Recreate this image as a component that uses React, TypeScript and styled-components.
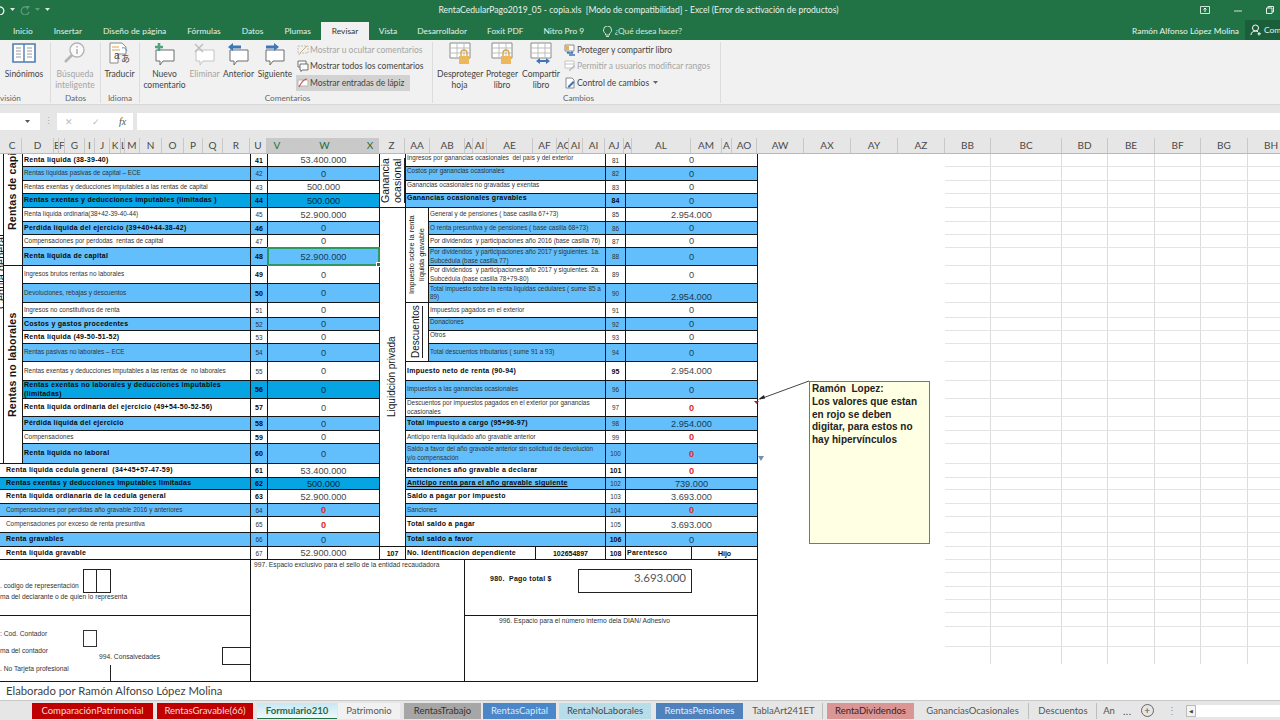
import React from 'react';
import styled, { createGlobalStyle } from 'styled-components';

const GlobalStyle = createGlobalStyle`
  html, body {
    margin: 0;
    padding: 0;
    background: #fff;
  }
  body {
    font-family: 'Lato', 'Open Sans', sans-serif;
  }
`;

const UI_FONT = `'Lato', 'Open Sans', sans-serif`;
const FORM_FONT = `'Liberation Sans', Arial, sans-serif`;

const Page = styled.div`
  width: 1280px;
  height: 720px;
  overflow: hidden;
  display: flex;
  flex-direction: column;
`;

/* ---------- title bar + tabs ---------- */

const TitleBar = styled.div`
  height: 20px;
  background: #217346;
  color: #fff;
  display: grid;
  grid-template-columns: 1fr auto 1fr;
  align-items: center;
  font: 8.6px ${UI_FONT};
`;

const QuickAccess = styled.div`
  display: flex;
  align-items: center;
  gap: 5px;
  margin-left: -5px;
`;

const WindowControls = styled.div`
  display: flex;
  justify-content: flex-end;
  align-items: center;
  gap: 24px;
  margin-right: 6px;
`;

const Title = styled.div`
  padding-right: 3px;
  white-space: pre;
  color: #e9f2ec;
`;

const TabBar = styled.div`
  height: 20px;
  background: #217346;
  display: flex;
  align-items: flex-end;
  padding-left: 2.5px;
  font: 8.4px ${UI_FONT};
`;

const Tab = styled.div<{ $active?: boolean }>`
  height: 18px;
  display: flex;
  align-items: center;
  padding: 0 10.5px;
  white-space: nowrap;
  color: ${(p) => (p.$active ? '#333' : '#e4efe8')};
  background: ${(p) => (p.$active ? '#f1f1f1' : 'transparent')};
`;

const TightTab = styled(Tab)`
  padding: 0 10px;
`;

const TellMe = styled(Tab)`
  gap: 3px;
  margin-left: -2px;
  letter-spacing: -0.1px;
  color: #d6e6dc;
`;

const UserArea = styled.div`
  margin-left: auto;
  height: 18px;
  display: flex;
  align-items: center;
  color: #e9f2ec;
`;

const ShareButton = styled.div`
  margin-left: 6px;
  width: 35px;
  height: 20px;
  margin-top: -2px;
  display: flex;
  align-items: center;
  gap: 2px;
  padding-left: 5px;
  box-sizing: border-box;
  background: #1b5e3a;
  overflow: hidden;
`;

/* ---------- ribbon ---------- */

const Ribbon = styled.div`
  height: 65px;
  box-sizing: border-box;
  background: #f1f1f1;
  border-bottom: 1px solid #d8d8d8;
  display: flex;
  font: 8.5px ${UI_FONT};
  color: #444;
`;

const Group = styled.div<{ $w: number; $pad?: number }>`
  width: ${(p) => p.$w}px;
  flex: none;
  box-sizing: border-box;
  padding-left: ${(p) => p.$pad ?? 0}px;
  display: flex;
  flex-direction: column;
  border-right: 1px solid #dcdcdc;
  margin: 2px 0 1px;
`;

const GroupBody = styled.div`
  flex: 1;
  display: flex;
  gap: 3px;
  min-height: 0;
`;

const GroupLabel = styled.div<{ $align?: string }>`
  height: 10px;
  line-height: 10px;
  text-align: ${(p) => p.$align ?? 'center'};
  font-size: 8.2px;
  color: #666;
`;

const BigButton = styled.div<{ $w: number; $off?: boolean }>`
  width: ${(p) => p.$w}px;
  flex: none;
  text-align: center;
  line-height: 11px;
  color: ${(p) => (p.$off ? '#a5a5a5' : '#444')};
  svg {
    display: block;
    margin: 0 auto 3px;
  }
`;

const SmallList = styled.div<{ $w: number }>`
  width: ${(p) => p.$w}px;
  flex: none;
  display: flex;
  flex-direction: column;
  gap: 1px;
`;

const SmallItem = styled.div<{ $off?: boolean; $sel?: boolean }>`
  height: 15.5px;
  display: flex;
  align-items: center;
  gap: 1px;
  padding-left: 1px;
  white-space: nowrap;
  color: ${(p) => (p.$off ? '#a5a5a5' : '#444')};
  background: ${(p) => (p.$sel ? '#d2d2d2' : 'transparent')};
  width: ${(p) => (p.$sel ? '113px' : 'auto')};
`;

const ItemCaret = styled.span`
  margin-left: 3px;
  display: flex;
`;

/* ---------- formula bar ---------- */

const FormulaBar = styled.div`
  height: 33px;
  box-sizing: border-box;
  padding-top: 8px;
  background: #e6e6e6;
  display: flex;
  align-items: flex-start;
`;

const NameBox = styled.div`
  width: 40px;
  height: 17px;
  background: #fff;
  display: flex;
  align-items: center;
  justify-content: flex-end;
  padding-right: 10px;
  box-sizing: border-box;
  color: #555;
`;

const BarDots = styled.div`
  width: 17px;
  text-align: center;
  height: 17px;
  line-height: 16px;
  font-size: 9px;
  color: #aaa;
`;

const FxBox = styled.div`
  width: 76px;
  height: 17px;
  background: #fff;
  display: flex;
  align-items: center;
  gap: 19px;
  padding-left: 8px;
  box-sizing: border-box;
  color: #bbb;
  font-size: 9px;
`;

const FxLabel = styled.span`
  font: italic 10px 'Liberation Serif', serif;
  color: #555;
`;

const FormulaInput = styled.div`
  flex: 1;
  margin-left: 4px;
  height: 17px;
  background: #fff;
`;

/* ---------- column header ---------- */

const ColHeader = styled.div`
  height: 16px;
  background: #e6e6e6;
  border-bottom: 1px solid #b9b9b9;
  box-sizing: border-box;
  display: flex;
  padding-left: 3px;
  overflow: hidden;
`;

const ColCell = styled.div<{ $w: number; $sel?: boolean }>`
  width: ${(p) => p.$w}px;
  flex: none;
  box-sizing: border-box;
  border-right: 1px solid #c8c8c8;
  background: ${(p) => (p.$sel ? '#c9c9c9' : 'transparent')};
  color: ${(p) => (p.$sel ? '#1e6b40' : '#4a4a4a')};
  text-align: center;
  font: 10px/15px ${UI_FONT};
  overflow: hidden;
  white-space: nowrap;
`;

/* ---------- sheet ---------- */

const Sheet = styled.div`
  position: relative;
  height: 528px;
  flex: none;
  display: flex;
  overflow: hidden;
`;

const FormArea = styled.div`
  width: 758px;
  flex: none;
  font-family: ${FORM_FONT};
`;

const Spacer = styled.div`
  width: 187px;
  flex: none;
`;

const Gridlines = styled.div`
  flex: 1;
  overflow: hidden;
`;

const GridRow = styled.div<{ $h: number }>`
  height: ${(p) => p.$h}px;
  box-sizing: border-box;
  border-bottom: 1px solid #e4e4e4;
  display: flex;
  &:last-child {
    border-bottom: 0;
  }
`;

const GridCell = styled.div<{ $w: number }>`
  width: ${(p) => p.$w}px;
  flex: none;
  box-sizing: border-box;
  border-right: 1px solid #dcdcdc;
`;

const FormGrid = styled.div`
  display: grid;
  grid-template-columns: 3px 18px 227px 16px 111px 25px 22px 106px 69px 19px 65px 65px;
  grid-template-rows: 12px 13px 12px 13px 13px 12px 12px 17px 17px 18px 14px 12px 12px 17px 18px 17px 17px 13px 12px 19px 13px 11px 13px 12px 15px 13px 12px;
  gap: 1px;
  padding-right: 1px;
  background: #161616;
`;

type Tone = 'white' | 'blue' | 'dark';

const toneBg: Record<Tone, string> = {
  white: '#ffffff',
  blue: '#62bffb',
  dark: '#07a4e4',
};

const toneInk: Record<Tone, string> = {
  white: '#43474b',
  blue: '#173b57',
  dark: '#052a42',
};

const Cell = styled.div<{ $row: number; $col: number; $colEnd?: number; $tone?: Tone }>`
  grid-row: ${(p) => p.$row};
  grid-column: ${(p) => p.$col} / ${(p) => p.$colEnd ?? p.$col + 1};
  background: ${(p) => toneBg[p.$tone ?? 'white']};
  min-width: 0;
  min-height: 0;
  overflow: hidden;
  position: relative;
`;

const Label = styled(Cell)<{ $bold?: boolean; $pad?: number; $under?: boolean; $top?: boolean }>`
  display: flex;
  align-items: ${(p) => (p.$top ? 'flex-start' : 'center')};
  padding-left: ${(p) => p.$pad ?? 1}px;
  padding-right: 2px;
  box-sizing: border-box;
  color: ${(p) => (p.$bold ? '#0a0a0a' : '#333')};
  font-size: ${(p) => (p.$bold ? '7px' : '6.4px')};
  font-weight: ${(p) => (p.$bold ? 700 : 400)};
  letter-spacing: ${(p) => (p.$bold ? '0.25px' : '0')};
  line-height: 8.5px;
  white-space: pre-wrap;
  text-decoration: ${(p) => (p.$under ? 'underline' : 'none')};
`;

const Num = styled(Cell)<{ $bold?: boolean }>`
  display: flex;
  align-items: center;
  justify-content: center;
  color: ${(p) => (p.$bold ? '#0a0a0a' : '#333')};
  font-size: ${(p) => (p.$bold ? '7px' : '6.4px')};
  font-weight: ${(p) => (p.$bold ? 700 : 400)};
`;

const Value = styled(Cell)<{ $red?: boolean; $selected?: boolean; $bottom?: boolean }>`
  display: flex;
  align-items: ${(p) => (p.$bottom ? 'flex-end' : 'center')};
  justify-content: center;
  font-size: 9.2px;
  color: ${(p) => (p.$red ? '#e02a2a' : toneInk[p.$tone ?? 'white'])};
  font-weight: ${(p) => (p.$red ? 700 : 400)};
  ${(p) =>
    p.$selected
      ? 'box-shadow: inset 0 0 0 1px #2e9a63, 0 0 0 1px #2e9a63; overflow: visible; z-index: 2;'
      : ''}
`;

const FillHandle = styled.span`
  position: absolute;
  right: -2px;
  bottom: -2px;
  width: 3px;
  height: 3px;
  background: #217346;
  border: 1px solid #fff;
`;

const Side = styled.div<{ $row: number; $rowEnd: number; $col: number; $font?: string; $lh?: number; $inset?: number; $bold?: boolean }>`
  grid-row: ${(p) => p.$row} / ${(p) => p.$rowEnd};
  grid-column: ${(p) => p.$col};
  background: #fff;
  overflow: hidden;
  min-height: 0;
  box-sizing: border-box;
  display: flex;
  flex-direction: column;
  align-items: ${(p) => (p.$inset !== undefined ? 'flex-start' : 'center')};
  justify-content: center;
  padding-top: ${(p) => p.$inset ?? 0}px;
  writing-mode: vertical-rl;
  transform: rotate(180deg);
  white-space: nowrap;
  color: #161616;
  font-size: ${(p) => p.$font ?? '10.6px'};
  font-weight: ${(p) => (p.$bold ? 700 : 400)};
  letter-spacing: ${(p) => (p.$bold ? '0.2px' : '0')};
  line-height: ${(p) => p.$lh ?? 1.05};
`;

const Underlined = styled.span`
  border-left: 1px solid #222;
  padding-left: 1px;
`;

const BottomGrid = styled.div`
  display: grid;
  grid-template-columns: 250px 213px 292px;
  grid-template-rows: 55px 65px;
  gap: 1px;
  padding: 1px 1px 1px 0;
  background: #161616;
  font-size: 6.7px;
  color: #333;
`;

const Panel = styled.div<{ $col: number; $row: string }>`
  grid-column: ${(p) => p.$col};
  grid-row: ${(p) => p.$row};
  background: #fff;
  min-height: 0;
  overflow: hidden;
`;

const SignBlock = styled(Panel)`
  padding-top: 9px;
`;

const SignRow = styled.div`
  display: flex;
  align-items: flex-end;
  height: 24px;
`;

const SignText = styled.div`
  width: 83px;
  padding-bottom: 4px;
  white-space: nowrap;
`;

const BoxPair = styled.div`
  width: 28px;
  height: 24px;
  box-sizing: border-box;
  border: 1px solid #222;
  display: flex;
  &::after {
    content: '';
    width: 1px;
    height: 100%;
    background: #222;
    margin-left: 12px;
  }
`;

const SignLine = styled.div`
  white-space: nowrap;
`;

const AccountantBlock = styled(Panel)`
  display: grid;
  grid-template-columns: 99px 11px 112px 28px;
  grid-template-rows: 14px 17px 18px 16px;
`;

const AccText = styled.div<{ $row: number; $wide?: boolean }>`
  grid-row: ${(p) => p.$row};
  grid-column: ${(p) => (p.$wide ? '2 / 4' : '1')};
  white-space: nowrap;
  display: flex;
  align-items: ${(p) => (p.$wide ? 'center' : 'flex-start')};
`;

const CodeLabel = styled.span`
  width: 83px;
  flex: none;
`;

const SmallBox = styled.div`
  width: 14px;
  height: 17px;
  box-sizing: border-box;
  border: 1px solid #333;
  flex: none;
`;

const NoteBox = styled.div`
  grid-row: 3;
  grid-column: 4;
  border: 1px solid #222;
  border-right: 0;
`;

const TickLine = styled.div`
  grid-row: 4;
  grid-column: 3;
  border-left: 1px solid #222;
`;

const StampText = styled.div<{ $pad: number }>`
  padding: 1px 0 0 ${(p) => p.$pad}px;
  white-space: nowrap;
`;

const PayPanel = styled(Panel)`
  display: flex;
  align-items: flex-start;
  padding-top: 9px;
`;

const PayLabel = styled.div`
  width: 113px;
  padding: 6px 0 0 25px;
  box-sizing: border-box;
  font-weight: 700;
  font-size: 7px;
  letter-spacing: 0.25px;
  white-space: pre;
  color: #111;
  flex: none;
`;

const PayBox = styled.div`
  width: 114px;
  height: 24px;
  box-sizing: border-box;
  border: 1px solid #222;
  text-align: right;
  padding: 1px 5px 0 0;
  font: 11.5px ${UI_FONT};
  color: #555;
`;

const FootNote = styled.div`
  height: 18px;
  flex: none;
  padding-left: 6px;
  font: 11.3px/17px ${UI_FONT};
  color: #3f3f3f;
`;

/* ---------- comment over the sheet ---------- */

const Comment = styled.div`
  position: absolute;
  left: 809px;
  top: 227px;
  width: 121px;
  height: 163px;
  box-sizing: border-box;
  border: 1px solid #777;
  background: #ffffe3;
  padding: 1px 2px;
  font: bold 10px/12.8px ${FORM_FONT};
  color: #222;
  white-space: pre-wrap;
`;

const Overlay = styled.svg`
  position: absolute;
  left: 750px;
  top: 220px;
  width: 70px;
  height: 90px;
`;

/* ---------- sheet tabs ---------- */

const TabStrip = styled.div`
  height: 20px;
  flex: none;
  background: #e6e6e6;
  border-top: 1px solid #c9c9c9;
  box-sizing: border-box;
  display: flex;
  align-items: center;
  font: 9.5px ${UI_FONT};
  padding-left: 32px;
`;

const SheetTab = styled.div<{ $w: number; $bg?: string; $fg?: string; $sep?: boolean; $active?: boolean }>`
  width: ${(p) => p.$w}px;
  height: 16px;
  flex: none;
  display: flex;
  align-items: center;
  justify-content: center;
  white-space: nowrap;
  box-sizing: border-box;
  overflow: hidden;
  background: ${(p) => p.$bg ?? 'transparent'};
  color: ${(p) => p.$fg ?? '#555'};
  font-weight: ${(p) => (p.$active ? 700 : 400)};
  ${(p) => (p.$active ? 'border-bottom: 1.5px solid #217346;' : '')}
  ${(p) => (p.$sep ? 'border-right: 1px solid #bdbdbd;' : '')}
`;

const TabGap = styled.div<{ $w: number }>`
  width: ${(p) => p.$w}px;
  flex: none;
`;

const MoreDots = styled.span`
  color: #444;
  font-size: 10px;
  letter-spacing: 0.5px;
  margin-left: 2px;
`;

const PlusCircle = styled.span`
  width: 11px;
  height: 11px;
  margin-left: 9px;
  border: 1px solid #666;
  border-radius: 50%;
  color: #555;
  font-size: 10px;
  line-height: 10px;
  text-align: center;
`;

const VDots = styled.span`
  margin-left: 13px;
  color: #999;
`;

const ScrollTrack = styled.div`
  margin-left: 9px;
  flex: 1;
  height: 12px;
  background: #fff;
  display: flex;
`;

const ScrollArrow = styled.div`
  width: 10px;
  height: 12px;
  box-sizing: border-box;
  border: 1px solid #bbb;
  color: #444;
  font-size: 5px;
  line-height: 10px;
  text-align: center;
  background: #f4f4f4;
`;

/* ---------- data ---------- */

const columns: [string, number][] = [
  ['C', 19], ['D', 32], ['E', 5], ['F', 6], ['G', 20], ['I', 10], ['J', 15], ['K', 11], ['L', 4], ['M', 15],
  ['N', 22], ['O', 22], ['P', 19], ['Q', 20], ['R', 27], ['U', 17], ['V', 21], ['W', 74], ['X', 17], ['Z', 26],
  ['AA', 25], ['AB', 35], ['A', 8], ['AI', 14], ['AE', 46], ['AF', 24], ['AG', 12], ['AI', 14], ['AI', 22], ['AJ', 19],
  ['A', 8], ['AL', 59], ['AM', 31], ['A', 10], ['AO', 25], ['AW', 47], ['AX', 47], ['AY', 47], ['AZ', 47], ['BB', 46],
  ['BC', 71], ['BD', 46], ['BE', 47], ['BF', 46], ['BG', 47], ['BH', 47],
];

type Row = {
  n: number;
  text: string;
  value: string;
  tone: Tone;
  bold?: boolean;
  numBold?: boolean;
  red?: boolean;
  under?: boolean;
  bottom?: boolean;
  top?: boolean;
};

const leftRows: Row[] = [
  { n: 41, text: 'Renta líquida (38-39-40)', value: '53.400.000', tone: 'white', bold: true, numBold: true },
  { n: 42, text: 'Rentas líquidas pasivas de capital – ECE', value: '0', tone: 'blue' },
  { n: 43, text: 'Rentas exentas y deducciones imputables a las rentas de capital', value: '500.000', tone: 'white' },
  { n: 44, text: 'Rentas exentas y deducciones imputables (limitadas )', value: '500.000', tone: 'dark', bold: true, numBold: true },
  { n: 45, text: 'Renta líquida ordinaria(38+42-39-40-44)', value: '52.900.000', tone: 'white' },
  { n: 46, text: 'Perdida líquida del ejercicio (39+40+44-38-42)', value: '0', tone: 'blue', bold: true, numBold: true },
  { n: 47, text: 'Compensaciones por perdodas  rentas de capital', value: '0', tone: 'white' },
  { n: 48, text: 'Renta líquida de capital', value: '52.900.000', tone: 'blue', bold: true, numBold: true },
  { n: 49, text: 'Ingresos brutos rentas no laborales', value: '0', tone: 'white', numBold: true },
  { n: 50, text: 'Devoluciones, rebajas y descuentos', value: '0', tone: 'blue', numBold: true },
  { n: 51, text: 'Ingresos no constitutivos de renta', value: '0', tone: 'white' },
  { n: 52, text: 'Costos y gastos procedentes', value: '0', tone: 'blue', bold: true },
  { n: 53, text: 'Renta líquida (49-50-51-52)', value: '0', tone: 'white', bold: true },
  { n: 54, text: 'Rentas pasivas no laborales – ECE', value: '0', tone: 'blue' },
  { n: 55, text: 'Rentas exentas y deducciones imputables a las rentas de  no laborales', value: '0', tone: 'white' },
  { n: 56, text: 'Rentas exentas no laborales y deducciones imputables (limitadas)', value: '0', tone: 'dark', bold: true, numBold: true },
  { n: 57, text: 'Renta líquida ordinaria del ejercicio (49+54-50-52-56)', value: '0', tone: 'white', bold: true, numBold: true },
  { n: 58, text: 'Pérdida líquida del ejercicio', value: '0', tone: 'blue', bold: true, numBold: true },
  { n: 59, text: 'Compensaciones', value: '0', tone: 'white', numBold: true },
  { n: 60, text: 'Renta líquida no laboral', value: '0', tone: 'blue', bold: true, numBold: true },
  { n: 61, text: 'Renta líquida cedula general  (34+45+57-47-59)', value: '53.400.000', tone: 'white', bold: true, numBold: true },
  { n: 62, text: 'Rentas exentas y deducciones imputables limitadas', value: '500.000', tone: 'dark', bold: true, numBold: true },
  { n: 63, text: 'Renta líquida ordianaria de la cedula general', value: '52.900.000', tone: 'white', bold: true, numBold: true },
  { n: 64, text: 'Compensaciones por perdidas año gravable 2016 y anteriores', value: '0', tone: 'blue', red: true },
  { n: 65, text: 'Compensaciones por exceso de renta presuntiva', value: '0', tone: 'white', red: true },
  { n: 66, text: 'Renta gravables', value: '0', tone: 'blue', bold: true },
  { n: 67, text: 'Renta líquida gravable', value: '52.900.000', tone: 'white', bold: true },
];

const rightRows: Row[] = [
  { n: 81, text: 'Ingresos por ganancias ocasionales  del país y del exterior', value: '0', tone: 'white', top: true },
  { n: 82, text: 'Costos por ganancias ocasionales', value: '0', tone: 'blue', top: true },
  { n: 83, text: 'Ganancias ocasionales no gravadas y exentas', value: '0', tone: 'white', top: true },
  { n: 84, text: 'Ganancias ocasionales gravables', value: '0', tone: 'blue', bold: true, numBold: true, top: true },
  { n: 85, text: 'General y de pensiones ( base casilla 67+73)', value: '2.954.000', tone: 'white' },
  { n: 86, text: 'O renta presuntiva y de pensiones ( base casilla 68+73)', value: '0', tone: 'blue' },
  { n: 87, text: 'Por dividendos  y participaciones año 2016 (base casilla 76)', value: '0', tone: 'white' },
  { n: 88, text: 'Por dividendos  y participaciones año 2017 y siguientes. 1a. Subcédula (base casilla 77)', value: '0', tone: 'blue' },
  { n: 89, text: 'Por dividendos  y participaciones año 2017 y siguientes. 2a. Subcédula (base casilla 78+79-80)', value: '0', tone: 'white' },
  { n: 90, text: 'Total impuesto sobre la renta líquidas cedulares ( sume 85 a 89)', value: '2.954.000', tone: 'blue', bottom: true },
  { n: 91, text: 'Impuestos pagados en el exterior', value: '0', tone: 'white' },
  { n: 92, text: 'Donaciones', value: '0', tone: 'blue', top: true },
  { n: 93, text: 'Otros', value: '0', tone: 'white', top: true },
  { n: 94, text: 'Total descuentos tributarios ( sume 91 a 93)', value: '0', tone: 'blue' },
  { n: 95, text: 'Impuesto neto de renta (90-94)', value: '2.954.000', tone: 'white', bold: true, numBold: true },
  { n: 96, text: 'Impuestos a las ganancias ocasionales', value: '0', tone: 'blue' },
  { n: 97, text: 'Descuentos por impuestos pagados en el exterior por ganancias ocasionales', value: '0', tone: 'white', red: true },
  { n: 98, text: 'Total impuesto a cargo (95+96-97)', value: '2.954.000', tone: 'blue', bold: true },
  { n: 99, text: 'Anticipo renta liquidado año gravable anterior', value: '0', tone: 'white', red: true },
  { n: 100, text: 'Saldo a favor del año gravable anterior sin solicitud de devolución y/o compensación', value: '0', tone: 'blue', red: true },
  { n: 101, text: 'Retenciones año gravable a declarar', value: '0', tone: 'white', bold: true, numBold: true, red: true },
  { n: 102, text: 'Anticipo renta para el año gravable siguiente', value: '739.000', tone: 'blue', bold: true, under: true },
  { n: 103, text: 'Saldo a pagar por impuesto', value: '3.693.000', tone: 'white', bold: true },
  { n: 104, text: 'Sanciones', value: '0', tone: 'blue', red: true },
  { n: 105, text: 'Total saldo a pagar', value: '3.693.000', tone: 'white', bold: true },
  { n: 106, text: 'Total saldo a favor', value: '0', tone: 'blue', bold: true, numBold: true },
];

const sheetTabs = [
  { name: 'ComparaciónPatrimonial', w: 121, gap: 4, bg: '#c00000', fg: '#f4dede' },
  { name: 'RentasGravable(66)', w: 96, gap: 4, bg: '#c00000', fg: '#f4dede' },
  { name: 'Formulario210', w: 80, gap: 1, bg: 'linear-gradient(#c8e8f2,#eef8fb)', fg: '#1e6b40', active: true },
  { name: 'Patrimonio', w: 62, gap: 4, bg: '#f1f1f1' },
  { name: 'RentasTrabajo', w: 77, gap: 2, bg: '#a6a6a6', fg: '#333' },
  { name: 'RentasCapital', w: 73, gap: 3, bg: '#4a86c8', fg: '#dfeaf6' },
  { name: 'RentaNoLaborales', w: 92, gap: 5, bg: '#b7dde8', fg: '#445' },
  { name: 'RentasPensiones', w: 87, gap: 2, bg: '#4f81bd', fg: '#e6eef8' },
  { name: 'TablaArt241ET', w: 78, gap: 4, sep: true },
  { name: 'RentaDividendos', w: 87, gap: 3, bg: '#da9694', fg: '#402020' },
  { name: 'GananciasOcasionales', w: 112, gap: 1, sep: true },
  { name: 'Descuentos', w: 67, gap: 0, sep: true },
];

const rowHeights = [13, 14, 13, 14, 14, 13, 13, 18, 18, 19, 15, 13, 13, 18, 19, 18, 18, 14, 13, 20, 14, 12, 14, 13, 16, 14, 13,
  13, 14, 13, 13, 14, 20, 17];

const gridCols = [46, 71, 46, 47, 46, 47, 47];

/* ---------- icons ---------- */

const Bubble = ({ stroke = '#6d6d6d' }: { stroke?: string }) => (
  <path d="M3 8h18v11H10l-3 4v-4H3z" fill="#fff" stroke={stroke} strokeWidth="1" />
);

const BubbleIcon = ({ kind }: { kind: 'new' | 'del' | 'prev' | 'next' }) => (
  <svg width="24" height="24" viewBox="0 0 24 24">
    <Bubble stroke={kind === 'del' ? '#c4c4c4' : '#6d6d6d'} />
    {kind === 'new' && <path d="M6 1v8M2 5h8" stroke="#52a37b" strokeWidth="2.6" />}
    {kind === 'del' && <path d="M2 2l8 8M10 2l-8 8" stroke="#bcbcbc" strokeWidth="1.4" />}
    {kind === 'prev' && <path d="M1 5l5-4v2.600h8v3H6V9z" fill="#3f76b8" />}
    {kind === 'next' && <path d="M16 5l-5-4v2.600H3v3h8V9z" fill="#3f76b8" />}
  </svg>
);

const BookIcon = () => (
  <svg width="24" height="24" viewBox="0 0 24 24">
    <path d="M1 2h22v18H1z" fill="#fff" stroke="#4f7cae" strokeWidth="1.6" />
    <path d="M12 2v18" stroke="#4f7cae" strokeWidth="1.4" />
    <path d="M4 6h5M4 9h5M4 12h5M4 15h5M15 6h5M15 9h5M15 12h5M15 15h5" stroke="#999" strokeWidth="1" />
  </svg>
);

const SearchIcon = () => (
  <svg width="24" height="24" viewBox="0 0 24 24">
    <circle cx="14" cy="8" r="7" fill="#fafafa" stroke="#b5b5b5" strokeWidth="1.4" />
    <path d="M14 7v5M14 4v1.500" stroke="#aaa" strokeWidth="1.4" />
    <path d="M9 13l-7 7" stroke="#b5b5b5" strokeWidth="2.6" />
  </svg>
);

const TranslateIcon = () => (
  <svg width="24" height="24" viewBox="0 0 24 24">
    <path d="M2 1h12l4 4v7H10v9H2z" fill="#fff" stroke="#8a8a8a" />
    <path d="M4 5h7M4 8h8" stroke="#d9a74c" strokeWidth="1" />
    <text x="6" y="17" fontSize="10" fill="#444" fontFamily="'Liberation Sans'">a</text>
    <text x="13" y="20" fontSize="9" fill="#444" fontFamily="'Noto Sans CJK JP'">あ</text>
    <path d="M14 6c3-1 4 1 5 3" stroke="#4f8fc9" fill="none" />
  </svg>
);

const SheetIcon = ({ overlay }: { overlay: 'lock' | 'share' }) => (
  <svg width="24" height="24" viewBox="0 0 24 24">
    <path d="M2 1h20v15H2z" fill="#fff" stroke="#8a8a8a" />
    <path d="M2 6h20M2 11h20M9 1v15M16 1v15" stroke="#bdbdbd" strokeWidth="1" />
    {overlay === 'lock' ? (
      <>
        <path d="M13 14v-3a3 3 0 016 0v3" fill="none" stroke="#d9a74c" strokeWidth="1.4" />
        <path d="M11 14h10v8H11z" fill="#edb85c" />
      </>
    ) : (
      <path d="M7 19l4-3v2h6v-2l4 3-4 3v-2h-6v2z" fill="#3f76b8" />
    )}
  </svg>
);

const SmallIcon = ({ kind }: { kind: 'hide' | 'all' | 'pen' | 'protect' | 'users' | 'track' }) => (
  <svg width="12" height="12" viewBox="0 0 12 12" style={{ flex: 'none' }}>
    {kind === 'hide' && (
      <>
        <path d="M1 2h10v7H4l-2 2V9H1z" fill="none" stroke="#c0c0c0" strokeDasharray="2 1" />
        <path d="M3 9l7-7" stroke="#c8b080" />
      </>
    )}
    {kind === 'all' && (
      <>
        <path d="M1 1h8v6H1z" fill="#fff" stroke="#707070" />
        <path d="M3 4h8v6H5l-1 1.500V10H3z" fill="#fff" stroke="#707070" />
      </>
    )}
    {kind === 'pen' && (
      <>
        <path d="M1 3h10v6H1z" fill="#fff" stroke="#b5b5b5" />
        <path d="M2 10C4 6 7 2 10 2" stroke="#d05050" fill="none" strokeWidth="1.2" />
      </>
    )}
    {kind === 'protect' && (
      <>
        <path d="M1 1h9v6H1z" fill="#fff" stroke="#8a8a8a" />
        <path d="M1 2h4v4H1z" fill="#e4b25a" />
        <path d="M3 9h6M3 9l1.500-1.500M9 9L7.500 7.500M5 11h6" stroke="#3f76b8" strokeWidth="1.3" />
      </>
    )}
    {kind === 'users' && (
      <>
        <path d="M1 1h9v7H1zM1 4h9" fill="#fff" stroke="#c4c4c4" />
        <path d="M5 10l5-5 1 1-5 5H5z" fill="#bcbcbc" />
      </>
    )}
    {kind === 'track' && (
      <>
        <path d="M2 1h6l2 2v8H2z" fill="#fff" stroke="#8a8a8a" />
        <path d="M4 9l5-5 1.500 1.500-5 5H4z" fill="#3f76b8" />
      </>
    )}
  </svg>
);

const Undo = ({ color, flip }: { color: string; flip?: boolean }) => (
  <svg width="10" height="10" viewBox="0 0 10 10">
    <g transform={flip ? 'translate(10 0) scale(-1 1)' : undefined}>
      <path d="M2 3a4 4 0 11-1 4" fill="none" stroke={color} strokeWidth="1.2" />
      <path d="M0 1l4 0-1 4z" fill={color} />
    </g>
  </svg>
);

const Caret = ({ color }: { color: string }) => (
  <svg width="5" height="4" viewBox="0 0 5 4">
    <path d="M0 0h5L2.500 3z" fill={color} />
  </svg>
);

const RibbonDisplayIcon = () => (
  <svg width="10" height="8" viewBox="0 0 10 8">
    <path d="M.5.500h9v7h-9z" fill="none" stroke="#cfe3d7" />
    <path d="M5 6V2M3.500 3.500L5 2l1.500 1.500" fill="none" stroke="#fff" />
  </svg>
);

const MinIcon = () => (
  <svg width="8" height="8" viewBox="0 0 8 8">
    <path d="M0 5h8" stroke="#cfe3d7" />
  </svg>
);

const RestoreIcon = () => (
  <svg width="8" height="8" viewBox="0 0 8 8">
    <path d="M.5 2h5.500v5.500H.5zM2 2V.5h5.500V6H6" fill="none" stroke="#e6f0ea" />
  </svg>
);

const BulbIcon = () => (
  <svg width="9" height="11" viewBox="0 0 9 11">
    <path d="M2.500 7.500C1 6.500.5 5.500.5 4a4 4 0 018 0c0 1.500-.5 2.500-2 3.500v1.500h-4zM3 10.500h3" fill="none" stroke="#dfeae3" strokeWidth=".9" />
  </svg>
);

const UserPlusIcon = () => (
  <svg width="12" height="12" viewBox="0 0 12 12" style={{ flex: 'none' }}>
    <circle cx="5.500" cy="4" r="3" fill="none" stroke="#fff" />
    <path d="M1 11c0-2.500 2-4 4.500-4 1 0 2 .3 2.500.8M9 8v3.500M7.500 9.800h3.500" fill="none" stroke="#fff" />
  </svg>
);

/* ---------- form ---------- */

const FormRows = () => (
  <FormGrid>
    <Side $row={1} $rowEnd={21} $col={1} $font="11px" $inset={154}>Cédula general</Side>
    <Side $row={1} $rowEnd={9} $col={2} $inset={35} $bold>Rentas de capital</Side>
    <Side $row={9} $rowEnd={21} $col={2} $bold>Rentas no laborales</Side>
    <Side $row={1} $rowEnd={5} $col={6} $font="10.5px" $lh={1.1}>
      <span>Ganancia</span>
      <Underlined>ocasional</Underlined>
    </Side>
    <Side $row={5} $rowEnd={27} $col={6} $font="10px">Liquidción privada</Side>
    <Side $row={5} $rowEnd={11} $col={7} $font="7.5px" $lh={1.3}>
      <span>Impuesto sobre la renta</span>
      <span>líquida gravable</span>
    </Side>
    <Side $row={11} $rowEnd={15} $col={7} $font="10px">
      <Underlined>Descuentos</Underlined>
    </Side>

    {leftRows.map((r, i) => (
      <React.Fragment key={r.n}>
        <Label
          $row={i + 1}
          $col={r.n >= 61 ? 1 : 3}
          $colEnd={4}
          $tone={r.tone}
          $bold={r.bold}
          $pad={r.n >= 61 ? 6 : 1}
        >
          {r.text}
        </Label>
        <Num $row={i + 1} $col={4} $tone={r.tone} $bold={r.numBold}>{r.n}</Num>
        <Value $row={i + 1} $col={5} $tone={r.tone} $red={r.red} $selected={r.n === 48}>
          {r.value}
          {r.n === 48 && <FillHandle />}
        </Value>
      </React.Fragment>
    ))}

    {rightRows.map((r, i) => (
      <React.Fragment key={r.n}>
        <Label
          $row={i + 1}
          $col={r.n >= 85 && r.n <= 94 ? 8 : 7}
          $colEnd={10}
          $tone={r.tone}
          $bold={r.bold}
          $under={r.under}
          $top={r.top}
        >
          {r.text}
        </Label>
        <Num $row={i + 1} $col={10} $tone={r.tone} $bold={r.numBold}>{r.n}</Num>
        <Value $row={i + 1} $col={11} $colEnd={13} $tone={r.tone} $red={r.red} $bottom={r.bottom}>
          {r.value}
        </Value>
      </React.Fragment>
    ))}

    <Num $row={27} $col={6} $bold>107</Num>
    <Label $row={27} $col={7} $colEnd={9} $bold>No. Identificación dependiente</Label>
    <Num $row={27} $col={9} $bold>102654897</Num>
    <Num $row={27} $col={10} $bold>108</Num>
    <Label $row={27} $col={11} $bold>Parentesco</Label>
    <Num $row={27} $col={12} $bold>Hijo</Num>
  </FormGrid>
);

const FormFooter = () => (
  <BottomGrid>
    <SignBlock $col={1} $row="1">
      <SignRow>
        <SignText>. codigo de representación</SignText>
        <BoxPair />
      </SignRow>
      <SignLine>ma del declarante o de quien lo representa</SignLine>
    </SignBlock>
    <Panel $col={2} $row="1 / 3">
      <StampText $pad={3}>997. Espacio exclusivo para el sello de la entidad recaudadora</StampText>
    </Panel>
    <PayPanel $col={3} $row="1">
      <PayLabel>980.  Pago total $</PayLabel>
      <PayBox>3.693.000</PayBox>
    </PayPanel>
    <AccountantBlock $col={1} $row="2">
      <AccText $row={2}>
        <CodeLabel>: Cod. Contador</CodeLabel>
        <SmallBox />
      </AccText>
      <AccText $row={3}>ma del contador</AccText>
      <AccText $row={3} $wide>994. Consalvedades</AccText>
      <NoteBox />
      <AccText $row={4}>. No Tarjeta profesional</AccText>
      <TickLine />
    </AccountantBlock>
    <Panel $col={3} $row="2">
      <StampText $pad={34}>996. Espacio para el número interno dela DIAN/ Adhesivo</StampText>
    </Panel>
  </BottomGrid>
);

export default function App() {
  return (
    <>
      <GlobalStyle />
      <Page>
        <TitleBar>
          <QuickAccess>
            <Undo color="#fff" />
            <Caret color="#dfeae3" />
            <Undo color="#5f9c7c" flip />
            <Caret color="#5f9c7c" />
            <Caret color="#dfeae3" />
          </QuickAccess>
          <Title>RentaCedularPago2019_05 - copia.xls  [Modo de compatibilidad] - Excel (Error de activación de productos)</Title>
          <WindowControls>
            <RibbonDisplayIcon />
            <MinIcon />
            <RestoreIcon />
          </WindowControls>
        </TitleBar>

        <TabBar>
          {['Inicio', 'Insertar', 'Diseño de página', 'Fórmulas', 'Datos', 'Plumas'].map((t) => (
            <Tab key={t}>{t}</Tab>
          ))}
          <Tab $active>Revisar</Tab>
          {['Vista', 'Desarrollador', 'Foxit PDF', 'Nitro Pro 9'].map((t) => (
            <TightTab key={t}>{t}</TightTab>
          ))}
          <TellMe>
            <BulbIcon />
            ¿Qué desea hacer?
          </TellMe>
          <UserArea>
            Ramón Alfonso López Molina
            <ShareButton>
              <UserPlusIcon />
              Compartir
            </ShareButton>
          </UserArea>
        </TabBar>

        <Ribbon>
          <Group $w={51}>
            <GroupBody>
              <BigButton $w={48}>
                <BookIcon />
                Sinónimos
              </BigButton>
            </GroupBody>
            <GroupLabel $align="left">visión</GroupLabel>
          </Group>
          <Group $w={50}>
            <GroupBody>
              <BigButton $w={48} $off>
                <SearchIcon />
                Búsqueda inteligente
              </BigButton>
            </GroupBody>
            <GroupLabel>Datos</GroupLabel>
          </Group>
          <Group $w={39}>
            <GroupBody>
              <BigButton $w={37}>
                <TranslateIcon />
                Traducir
              </BigButton>
            </GroupBody>
            <GroupLabel>Idioma</GroupLabel>
          </Group>
          <Group $w={293} $pad={3}>
            <GroupBody>
              <BigButton $w={43}>
                <BubbleIcon kind="new" />
                Nuevo comentario
              </BigButton>
              <BigButton $w={31} $off>
                <BubbleIcon kind="del" />
                Eliminar
              </BigButton>
              <BigButton $w={31}>
                <BubbleIcon kind="prev" />
                Anterior
              </BigButton>
              <BigButton $w={36}>
                <BubbleIcon kind="next" />
                Siguiente
              </BigButton>
              <SmallList $w={130}>
                <SmallItem $off><SmallIcon kind="hide" />Mostrar u ocultar comentarios</SmallItem>
                <SmallItem><SmallIcon kind="all" />Mostrar todos los comentarios</SmallItem>
                <SmallItem $sel><SmallIcon kind="pen" />Mostrar entradas de lápiz</SmallItem>
              </SmallList>
            </GroupBody>
            <GroupLabel>Comentarios</GroupLabel>
          </Group>
          <Group $w={288} $pad={4}>
            <GroupBody>
              <BigButton $w={45}>
                <SheetIcon overlay="lock" />
                Desproteger hoja
              </BigButton>
              <BigButton $w={34}>
                <SheetIcon overlay="lock" />
                Proteger libro
              </BigButton>
              <BigButton $w={38}>
                <SheetIcon overlay="share" />
                Compartir libro
              </BigButton>
              <SmallList $w={155}>
                <SmallItem><SmallIcon kind="protect" />Proteger y compartir libro</SmallItem>
                <SmallItem $off><SmallIcon kind="users" />Permitir a usuarios modificar rangos</SmallItem>
                <SmallItem>
                  <SmallIcon kind="track" />
                  Control de cambios
                  <ItemCaret><Caret color="#666" /></ItemCaret>
                </SmallItem>
              </SmallList>
            </GroupBody>
            <GroupLabel>Cambios</GroupLabel>
          </Group>
        </Ribbon>

        <FormulaBar>
          <NameBox><Caret color="#555" /></NameBox>
          <BarDots>⋮</BarDots>
          <FxBox>
            ✕<span>✓</span>
            <FxLabel>fx</FxLabel>
          </FxBox>
          <FormulaInput />
        </FormulaBar>

        <ColHeader>
          {columns.map(([name, w], i) => (
            <ColCell key={i} $w={w} $sel={name === 'V' || name === 'W' || name === 'X'}>{name}</ColCell>
          ))}
        </ColHeader>

        <Sheet>
          <FormArea>
            <FormRows />
            <FormFooter />
          </FormArea>
          <Spacer />
          <Gridlines>
            {rowHeights.map((h, i) => (
              <GridRow key={i} $h={h}>
                {gridCols.map((w, j) => (
                  <GridCell key={j} $w={w} />
                ))}
              </GridRow>
            ))}
          </Gridlines>
          <Overlay viewBox="0 0 70 90">
            <path d="M59 7L10 25" stroke="#444" strokeWidth="1" />
            <path d="M8 25.500l6-4.500 1 3.500z" fill="#222" />
            <path d="M4 27h5l-2.500 3z" fill="#c0132a" />
            <path d="M8 82h6l-3 5z" fill="#6f8fb5" />
          </Overlay>
          <Comment>{'Ramón  Lopez:\nLos valores que estan\nen rojo se deben\ndigitar, para estos no\nhay hipervínculos'}</Comment>
        </Sheet>

        <FootNote>Elaborado por Ramón Alfonso López Molina</FootNote>

        <TabStrip>
          {sheetTabs.map((t) => (
            <React.Fragment key={t.name}>
              <SheetTab $w={t.w} $bg={t.bg} $fg={t.fg} $sep={t.sep} $active={t.active}>{t.name}</SheetTab>
              <TabGap $w={t.gap} />
            </React.Fragment>
          ))}
          <SheetTab $w={24}>An</SheetTab>
          <MoreDots>...</MoreDots>
          <PlusCircle>+</PlusCircle>
          <VDots>⋮</VDots>
          <ScrollTrack>
            <ScrollArrow>◀</ScrollArrow>
          </ScrollTrack>
        </TabStrip>
      </Page>
    </>
  );
}
